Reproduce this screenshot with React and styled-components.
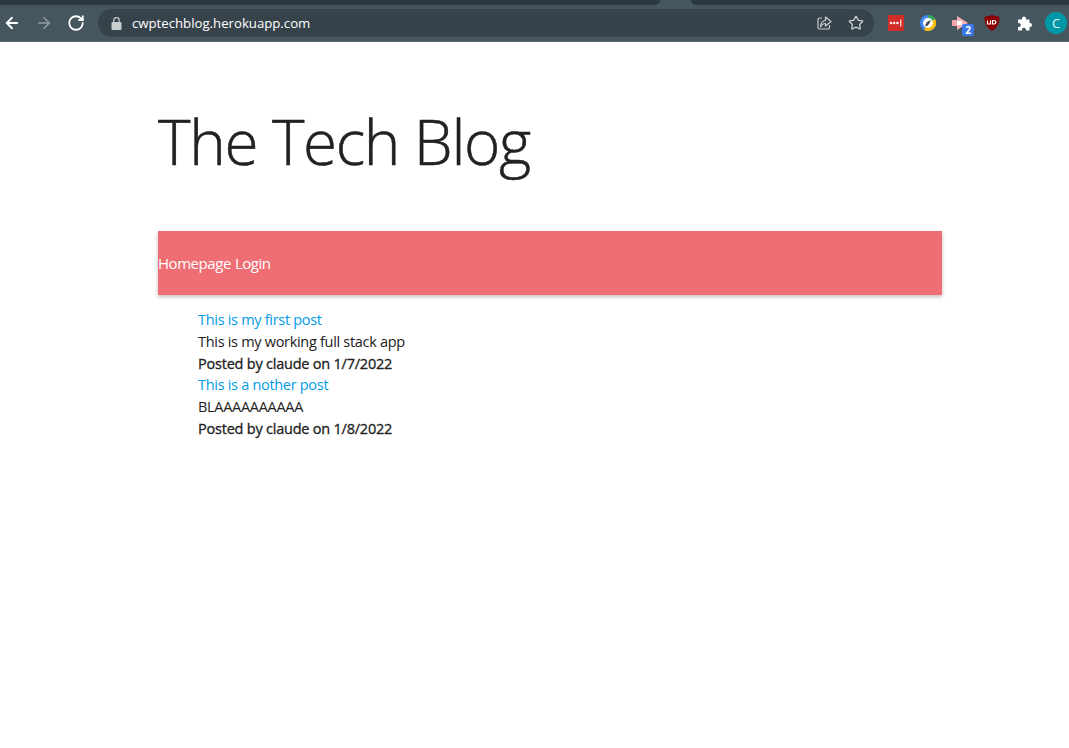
import React from "react";
import styled, { createGlobalStyle } from "styled-components";
import { ArrowLeft, ArrowRight, RotateCw, Star } from "lucide-react";

const Global = createGlobalStyle`
  html, body { margin: 0; padding: 0; background: #fff; }
  body { font-family: "Open Sans", "Noto Sans", sans-serif; color: #212121; }
`;

const posts = [
  { title: "This is my first post", body: "This is my working full stack app", meta: "Posted by claude on 1/7/2022" },
  { title: "This is a nother post", body: "BLAAAAAAAAAA", meta: "Posted by claude on 1/8/2022" },
];

const Page = styled.div`
  width: 1069px;
  height: 748px;
  overflow: hidden;
  display: flex;
  flex-direction: column;
`;

const Chrome = styled.div`
  height: 42px;
  background: #45565f;
  display: flex;
  flex-direction: column;
`;

const TabStrip = styled.div`
  height: 5px;
  display: flex;
  justify-content: space-between;
`;

const TabEdge = styled.div`
  height: 5px;
  width: ${(p) => p.$width}px;
  background: #2c3840;
  border-radius: ${(p) => (p.$side === "left" ? "0 0 6px 0" : "0 0 0 6px")};
`;

const Toolbar = styled.div`
  flex: 1;
  border-bottom: 1px solid #5a6a72;
  display: flex;
  align-items: center;
  padding-left: 3px;
`;

const NavGroup = styled.div`
  display: flex;
  gap: 14px;
`;

const NavButton = styled.div`
  display: flex;
  color: ${(p) => (p.$dim ? "#8f9ba1" : "#fff")};
`;

const Omnibox = styled.div`
  width: 776px;
  height: 28px;
  margin-left: 13px;
  border-radius: 14px;
  background: #37434b;
  display: flex;
  align-items: center;
  padding: 0 10px 0 13px;
  box-sizing: border-box;
  color: #fff;
  font-size: 13.2px;
`;

const Url = styled.span`
  margin-left: 10px;
  flex: 1;
`;

const OmniAction = styled.div`
  display: flex;
  margin-left: 16px;
  color: #c9ced1;
`;

const Extensions = styled.div`
  display: flex;
  align-items: center;
  margin-left: 14px;
  gap: 16px;
`;

const Ext = styled.div`
  position: relative;
  width: 16px;
  height: 16px;
  display: flex;
  align-items: center;
  justify-content: center;
`;

const Badge = styled.span`
  position: absolute;
  right: -6px;
  bottom: -5px;
  width: 12px;
  height: 12px;
  border-radius: 2px;
  background: #3b78e7;
  color: #fff;
  font-size: 10px;
  font-weight: 700;
  line-height: 12px;
  text-align: center;
`;

const Avatar = styled.div`
  width: 22px;
  height: 22px;
  margin-left: -3px;
  border-radius: 50%;
  background: #0097a7;
  color: #e6f7f9;
  font-size: 13px;
  line-height: 22px;
  text-align: center;
`;

const Content = styled.main`
  width: 784px;
  margin-left: 158px;
`;

const Title = styled.h1`
  margin: 0;
  padding-top: 57px;
  height: 132px;
  font-size: 62px;
  font-weight: 300;
  letter-spacing: -1.35px;
  -webkit-text-stroke: 0.5px #212121;
  line-height: 84px;
  color: #212121;
`;

const Nav = styled.nav`
  height: 64px;
  background: #ef6e73;
  box-shadow: 0 2px 4px rgba(0, 0, 0, 0.25);
  color: #fff;
  font-size: 15px;
  letter-spacing: -0.45px;
  line-height: 64px;
  display: flex;
  gap: 4px;
`;

const PostList = styled.div`
  padding: 14px 0 0 40px;
  font-size: 14.5px;
  letter-spacing: -0.3px;
  line-height: 21.8px;
`;

const PostTitle = styled.a`
  display: block;
  color: #039be5;
`;

const PostBody = styled.div`
  color: #212121;
`;

const PostMeta = styled.div`
  color: #212121;
  letter-spacing: -0.22px;
  -webkit-text-stroke: 0.3px #212121;
`;

export default function App() {
  return (
    <Page>
      <Global />
      <Chrome>
        <TabStrip>
          <TabEdge $side="left" $width={660} />
          <TabEdge $side="right" $width={378} />
        </TabStrip>
        <Toolbar>
          <NavGroup>
            <NavButton><ArrowLeft size={18} strokeWidth={2.4} /></NavButton>
            <NavButton $dim><ArrowRight size={18} strokeWidth={2.2} /></NavButton>
            <NavButton><RotateCw size={18} strokeWidth={2.4} /></NavButton>
          </NavGroup>
          <Omnibox>
            <svg width="11" height="13" viewBox="0 0 11 13">
              <rect x="0.5" y="5" width="10" height="8" rx="1" fill="#c9ced1" />
              <path d="M2.8 5V3.4a2.7 2.7 0 0 1 5.4 0V5" fill="none" stroke="#c9ced1" strokeWidth="1.2" />
            </svg>
            <Url>cwptechblog.herokuapp.com</Url>
            <OmniAction>
              <svg width="16" height="16" viewBox="0 0 16 16" fill="none" stroke="currentColor" strokeWidth="1.2" strokeLinejoin="round">
                <path d="M6 3H3.5A1.5 1.5 0 0 0 2 4.5v8A1.5 1.5 0 0 0 3.5 14h8.5a1.5 1.5 0 0 0 1.5-1.5V10" />
                <path d="M9.5 2 15 6.5 9.5 11V8.5C7 8.5 5.5 9.5 4.5 12c0-4 2-6.5 5-6.5z" />
              </svg>
            </OmniAction>
            <OmniAction><Star size={16} /></OmniAction>
          </Omnibox>
          <Extensions>
            <Ext>
              <svg width="16" height="16" viewBox="0 0 16 16">
                <rect width="16" height="16" rx="1" fill="#d32d27" />
                <circle cx="3" cy="8" r="1.2" fill="#fff" />
                <circle cx="6.2" cy="8" r="1.2" fill="#fff" />
                <circle cx="9.4" cy="8" r="1.2" fill="#fff" />
                <rect x="12.2" y="4.5" width="1.1" height="7" fill="#fff" />
              </svg>
            </Ext>
            <Ext>
              <svg width="16" height="16" viewBox="0 0 16 16">
                <circle cx="8" cy="8" r="8" fill="#4285f4" />
                <path d="M8 0a8 8 0 0 1 7 4L8 8z" fill="#34a853" />
                <path d="M15 4a8 8 0 0 1-3 11L8 8z" fill="#fbbc05" />
                <path d="M12 15a8 8 0 0 1-8 0l4-7z" fill="#fbbc05" />
                <circle cx="8" cy="8" r="5" fill="#fff" />
                <path d="M11 5 9 9 7 11 5 11 7 7z" fill="#3c4043" />
              </svg>
            </Ext>
            <Ext>
              <svg width="16" height="16" viewBox="0 0 16 16">
                <rect x="0" y="5" width="7" height="6" fill="#f4a6a8" />
                <path d="M5 1 16 8 5 15z" fill="#f6b3b5" />
                <rect x="5" y="6" width="5" height="4" fill="#fff" />
              </svg>
              <Badge>2</Badge>
            </Ext>
            <Ext>
              <svg width="16" height="16" viewBox="0 0 16 16">
                <path d="M8 0 15.5 2c0 7-2.5 11-7.5 14C3 13 .5 9 .5 2z" fill="#8b0000" />
                <path d="M3.5 5.5v3.5h3V5.5M8.5 5.5v3.5c2.5 0 3.5-.5 3.5-1.75S11 5.5 8.5 5.5z" fill="none" stroke="#fff" strokeWidth="1.1" />
              </svg>
            </Ext>
            <Ext>
              <svg width="16" height="16" viewBox="0 0 16 16">
                <path d="M6 3.5a2 2 0 0 1 4 0v1h3.5V8h.5a2 2 0 0 1 0 4h-.5v3.5H10v-.8a2 2 0 0 0-4 0v.8H2V12h.8a2 2 0 0 0 0-4H2V4.5h4z" fill="#fff" />
              </svg>
            </Ext>
            <Avatar>C</Avatar>
          </Extensions>
        </Toolbar>
      </Chrome>
      <Content>
        <Title>The Tech Blog</Title>
        <Nav>
          <span>Homepage</span>
          <span>Login</span>
        </Nav>
        <PostList>
          {posts.map((post) => (
            <div key={post.title}>
              <PostTitle>{post.title}</PostTitle>
              <PostBody>{post.body}</PostBody>
              <PostMeta>{post.meta}</PostMeta>
            </div>
          ))}
        </PostList>
      </Content>
    </Page>
  );
}
